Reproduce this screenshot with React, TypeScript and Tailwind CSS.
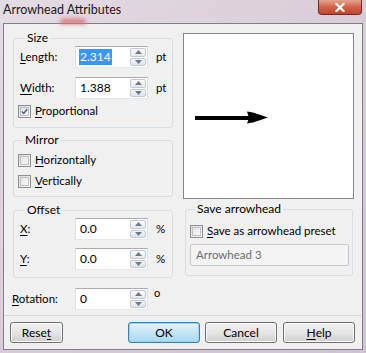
import React from "react";

const font = { fontFamily: 'Lato, "Open Sans", sans-serif' };

const U = ({ children }: { children: React.ReactNode }) => <span className="underline underline-offset-2">{children}</span>;

const Spin = ({ value, selected }: { value: string; selected?: boolean }) => {
  return (
    <div className="flex h-[22px] w-[73px] border border-[#abadb3] border-x-[#dbdfe6] border-b-[#e3e9ef] bg-white">
      <div className="flex flex-1 items-center pl-[3px] text-[12px] leading-none text-black">
        {selected ? <span className="bg-[#3399ff] px-px py-[2px] text-white">{value}</span> : <span className="px-px">{value}</span>}
      </div>
      <div className="flex w-[17px] flex-col gap-px py-px pr-px">
        <div className="flex flex-1 items-center justify-center rounded-[2px] border border-[#c3cad3] bg-gradient-to-b from-[#fafbfc] to-[#e4e8ee]">
          <svg width="7" height="4" viewBox="0 0 7 4"><path d="M0 4 L3.5 0 L7 4 Z" fill="#6b7a8c" /></svg>
        </div>
        <div className="flex flex-1 items-center justify-center rounded-[2px] border border-[#c3cad3] bg-gradient-to-b from-[#f4f6f8] to-[#dfe4ea]">
          <svg width="7" height="4" viewBox="0 0 7 4"><path d="M0 0 L7 0 L3.5 4 Z" fill="#6b7a8c" /></svg>
        </div>
      </div>
    </div>
  );
};

const Check = ({ checked, children }: { checked?: boolean; children: React.ReactNode }) => (
  <div className="flex h-[16px] items-center gap-[4px]">
    <div className="flex h-[13px] w-[13px] items-center justify-center border border-[#8e8f8f] bg-gradient-to-br from-[#dcdcdc] to-[#fbfbfb] p-px">
      <div className="flex h-full w-full items-center justify-center border border-[#c0c0c0] bg-gradient-to-br from-[#e2e2e2] to-[#fafafa]">
        {checked && (
          <svg width="9" height="9" viewBox="0 0 9 9">
            <path d="M1 4.5 L3.5 7 L8 1.5" stroke="#4a5f97" strokeWidth="2" fill="none" />
          </svg>
        )}
      </div>
    </div>
    <span className="whitespace-nowrap">{children}</span>
  </div>
);

const Group = ({ title, className, children }: { title: string; className?: string; children: React.ReactNode }) => (
  <fieldset className={"rounded-[3px] border border-[#d5dfe5] " + (className ?? "")}>
    <legend className="ml-[5px] px-[2px] text-[12px] leading-[16px]">{title}</legend>
    {children}
  </fieldset>
);

const Btn = ({ children, w, focus }: { children: React.ReactNode; w: string; focus?: boolean }) => (
  <div
    className={
      "flex h-[21px] items-center justify-center rounded-[3px] border text-[12px] " +
      w +
      (focus
        ? " border-[#3c7fb1] bg-gradient-to-b from-[#e5f4fc] via-[#c4e5f6] to-[#a7d9f5] shadow-[inset_0_0_0_1px_#97d4f3]"
        : " border-[#707070] bg-gradient-to-b from-[#f2f2f2] via-[#e5e5e5] to-[#cfcfcf] shadow-[inset_0_0_0_1px_#fcfcfc]")
    }
  >
    {children}
  </div>
);

export default function App() {
  return (
    <div className="h-[353px] w-[366px] overflow-hidden bg-gradient-to-br from-[#e4dce4] via-[#d9ccd8] to-[#cfc3d3] text-[11.5px] text-black" style={font}>
      <div className="relative flex h-[23px] items-start">
        <div className="pl-[3px] pt-[1px] text-[12.5px] leading-[18px] text-[#1a1a1a]">Arrowhead Attributes</div>
        <div className="absolute left-[60px] top-[19px] h-[5px] w-[26px] rounded-full bg-[#d9757a] blur-[2px]" />
        <div className="absolute right-[4px] top-0 flex h-[15px] w-[44px] items-center justify-center rounded-b-[4px] border border-t-0 border-[#6e2a22] bg-gradient-to-b from-[#e7a493] via-[#d1624a] to-[#c2452c]">
          <svg width="10" height="9" viewBox="0 0 10 9">
            <path d="M1.5 1 L8.5 8 M8.5 1 L1.5 8" stroke="#ffffff" strokeWidth="2.2" strokeLinecap="square" />
          </svg>
        </div>
      </div>
      <div className="ml-[3px] flex h-[327px] w-[360px] flex-col border border-[#7f7f8a] bg-[#f0f0f0]">
        <div className="flex gap-[10px] pl-[9px] pt-[6px]">
          <div className="flex w-[160px] flex-col">
            <Group title="Size" className="pb-[8px] pl-[6px]">
              <div className="flex h-[22px] items-center">
                <span className="w-[55px]"><U>L</U>ength:</span>
                <Spin value="2.314" selected />
                <span className="ml-[8px]">pt</span>
              </div>
              <div className="mt-[9px] flex h-[22px] items-center">
                <span className="w-[55px]"><U>W</U>idth:</span>
                <Spin value="1.388" />
                <span className="ml-[8px]">pt</span>
              </div>
              <div className="mt-[4px] -ml-[2px]">
                <Check checked><U>P</U>roportional</Check>
              </div>
            </Group>
            <Group title="Mirror" className="mt-[4px] pb-[7px] pl-[4px] pt-[4px]">
              <Check><U>H</U>orizontally</Check>
              <div className="mt-[5px]">
                <Check><U>V</U>ertically</Check>
              </div>
            </Group>
            <Group title="Offset" className="mt-[5px] pb-[7px] pl-[6px]">
              <div className="flex h-[22px] items-center">
                <span className="w-[55px]"><U>X</U>:</span>
                <Spin value="0.0" />
                <span className="ml-[8px]">%</span>
              </div>
              <div className="mt-[8px] flex h-[22px] items-center">
                <span className="w-[55px]"><U>Y</U>:</span>
                <Spin value="0.0" />
                <span className="ml-[8px]">%</span>
              </div>
            </Group>
            <div className="-ml-[1px] mt-[10px] flex h-[22px] items-center">
              <span className="w-[63px]"><U>R</U>otation:</span>
              <Spin value="0" />
              <span className="ml-[6px] self-start text-[11px] leading-[10px]">o</span>
            </div>
          </div>
          <div className="flex w-[171px] flex-col">
            <div className="mt-[3px] flex h-[166px] items-center border border-[#828790] bg-white pl-[11px] pt-[4px]">
              <svg width="75" height="14" viewBox="0 0 75 14">
                <path d="M0 5 H55 V9 H0 Z" fill="#000" />
                <path d="M52 0.5 L58 1.5 L73 6.5 L58 11.5 L52 12.5 L54 7 Z" fill="#000" />
              </svg>
            </div>
            <Group title="Save arrowhead" className="ml-[2px] mr-[1px] mt-[2px] pb-[9px] pl-[4px] pr-[3px] pt-[6px]">
              <Check><U>S</U>ave as arrowhead preset</Check>
              <div className="mt-[5px] flex h-[22px] items-center rounded-[2px] border border-[#c9c9c9] bg-[#f4f4f4] pl-[5px] text-[#6d6d6d]">
                Arrowhead 3
              </div>
            </Group>
          </div>
        </div>
        <div className="mt-[5px] h-px bg-[#dadada]" />
        <div className="flex pl-[6px] pt-[6px]">
          <Btn w="w-[53px]">Rese<U>t</U></Btn>
          <div className="ml-[65px]">
            <Btn w="w-[72px]" focus>OK</Btn>
          </div>
          <div className="ml-[5px]">
            <Btn w="w-[72px]">Cancel</Btn>
          </div>
          <div className="ml-[6px]">
            <Btn w="w-[72px]"><U>H</U>elp</Btn>
          </div>
        </div>
      </div>
    </div>
  );
}
